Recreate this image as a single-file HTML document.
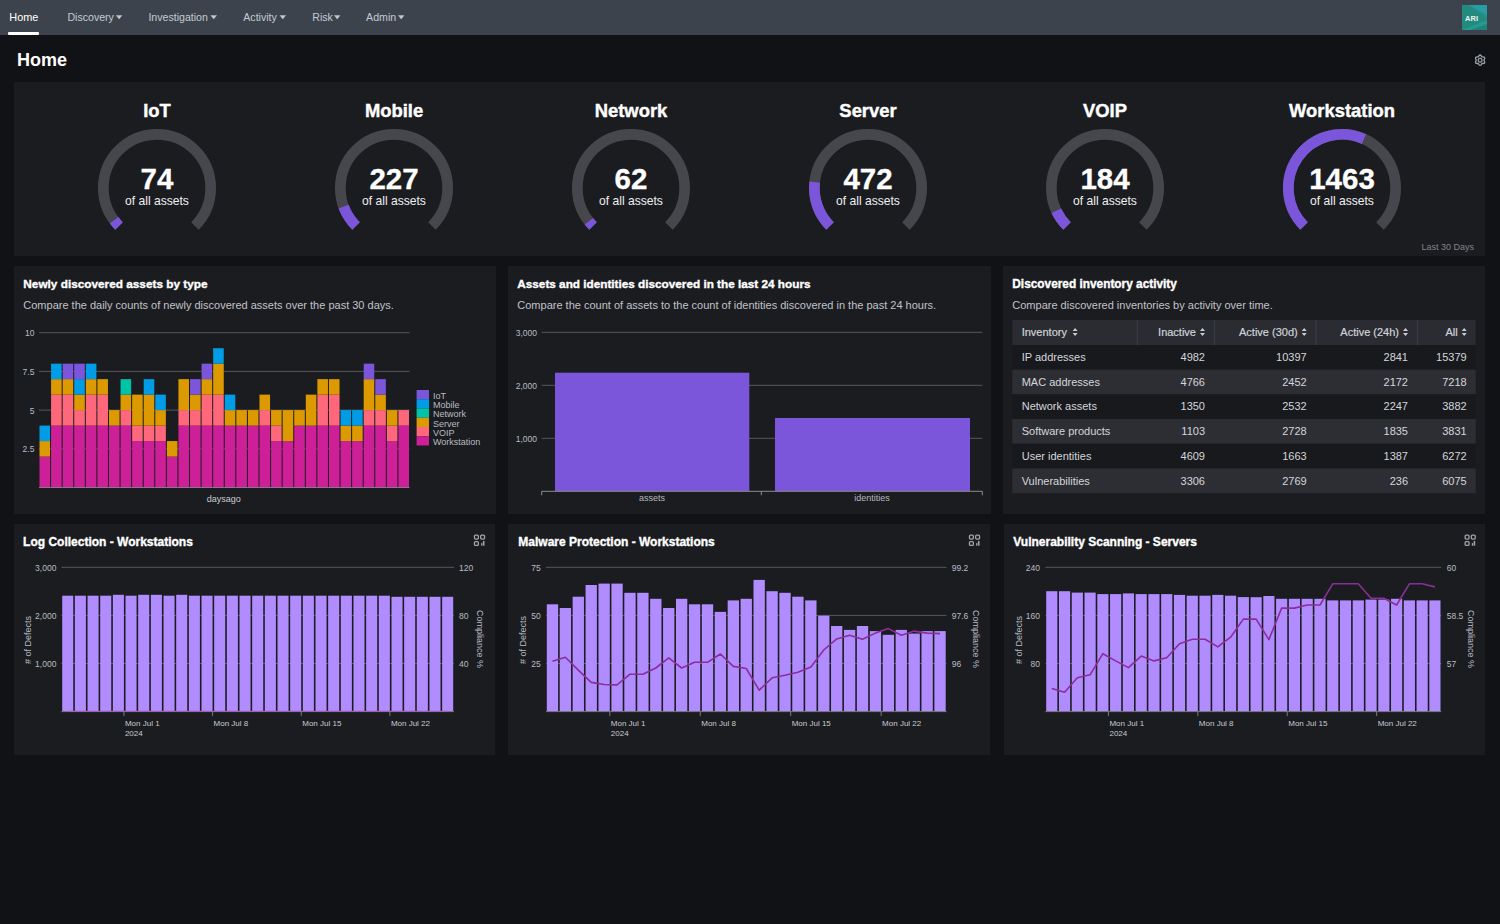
<!DOCTYPE html>
<html><head><meta charset="utf-8"><style>
*{box-sizing:border-box;margin:0;padding:0}
html,body{width:1500px;height:924px;overflow:hidden;background:#111215;font-family:"Liberation Sans",sans-serif;color:#e1e2e5}
.abs{position:absolute}
svg{position:absolute;overflow:visible}
svg text{font-family:"Liberation Sans",sans-serif}
#nav{position:absolute;left:0;top:0;width:1500px;height:35px;background:#3c434c}
.panel{position:absolute;background:#1b1c20}
</style></head><body>
<div id="nav"></div>
<svg style="left:0;top:0" width="1500" height="80">
<text x="9.3" y="20.8" font-size="10.9" fill="#fff">Home</text>
<rect x="8" y="32" width="31" height="3" rx="1" fill="#fff"/>
<text x="67.4" y="20.8" font-size="10.6" fill="#c3cbd4">Discovery</text>
<path d="M116.3 15.5h5.6l-2.8 3.6z" fill="#c3cbd4" stroke="#c3cbd4" stroke-width="0.4" stroke-linejoin="round"/>
<text x="148.4" y="20.8" font-size="10.6" fill="#c3cbd4">Investigation</text>
<path d="M210.9 15.5h5.6l-2.8 3.6z" fill="#c3cbd4" stroke="#c3cbd4" stroke-width="0.4" stroke-linejoin="round"/>
<text x="243.3" y="20.8" font-size="10.6" fill="#c3cbd4">Activity</text>
<path d="M280 15.5h5.6l-2.8 3.6z" fill="#c3cbd4" stroke="#c3cbd4" stroke-width="0.4" stroke-linejoin="round"/>
<text x="312.3" y="20.8" font-size="10.6" fill="#c3cbd4">Risk</text>
<path d="M334.4 15.5h5.6l-2.8 3.6z" fill="#c3cbd4" stroke="#c3cbd4" stroke-width="0.4" stroke-linejoin="round"/>
<text x="366.1" y="20.8" font-size="10.6" fill="#c3cbd4">Admin</text>
<path d="M398.4 15.5h5.6l-2.8 3.6z" fill="#c3cbd4" stroke="#c3cbd4" stroke-width="0.4" stroke-linejoin="round"/>
<g transform="translate(1462,5)"><rect width="25" height="25" fill="#238a7e"/><polygon points="6.5,0 25,0 25,10.5" fill="#279ea6"/><polygon points="6.5,0 25,10.5 25,13.5 19,9" fill="#25928f" opacity="0.6"/><polygon points="0,25 25,15 25,25" fill="#259a92"/><polygon points="8,25 25,19 25,25" fill="#228479"/><text x="3" y="15.6" font-size="7.4" font-weight="bold" fill="#eef5f4" letter-spacing="0.2">ARI</text></g>
<path d="M1478.22 56.95Q1480.1 53 1481.97 56.95Q1486.34 56.6 1483.85 60.2Q1486.34 63.8 1481.97 63.45Q1480.1 67.4 1478.22 63.45Q1473.86 63.8 1476.35 60.2Q1473.86 56.6 1478.22 56.95Z" fill="none" stroke="#9ea3a9" stroke-width="1.3" stroke-linejoin="round"/><circle cx="1480.1" cy="60.2" r="1.9" fill="none" stroke="#9ea3a9" stroke-width="1.2"/>
<text x="17" y="66.3" font-size="18" font-weight="bold" fill="#fff">Home</text>
</svg>
<div class="panel" style="left:14px;top:82px;width:1471px;height:174px"></div>
<svg style="left:0;top:0" width="1500" height="300">
<path d="M119.06 225.94A53.65 53.65 0 1 1 194.94 225.94" fill="none" stroke="#46474c" stroke-width="10.7"/>
<path d="M119.06 225.94A53.65 53.65 0 0 1 114.13 220.25" fill="none" stroke="#7b56db" stroke-width="10.7"/>
<text x="157" y="117" text-anchor="middle" font-size="18.4" font-weight="bold" fill="#fff" stroke="#fff" stroke-width="0.4">IoT</text>
<text x="157" y="188.6" text-anchor="middle" font-size="29.5" font-weight="bold" fill="#fff" stroke="#fff" stroke-width="0.3">74</text>
<text x="157" y="204.6" text-anchor="middle" font-size="12.1" fill="#f0f0f2">of all assets</text>
<path d="M356.06 225.94A53.65 53.65 0 1 1 431.94 225.94" fill="none" stroke="#46474c" stroke-width="10.7"/>
<path d="M356.06 225.94A53.65 53.65 0 0 1 343.68 206.62" fill="none" stroke="#7b56db" stroke-width="10.7"/>
<text x="394" y="117" text-anchor="middle" font-size="18.4" font-weight="bold" fill="#fff" stroke="#fff" stroke-width="0.4">Mobile</text>
<text x="394" y="188.6" text-anchor="middle" font-size="29.5" font-weight="bold" fill="#fff" stroke="#fff" stroke-width="0.3">227</text>
<text x="394" y="204.6" text-anchor="middle" font-size="12.1" fill="#f0f0f2">of all assets</text>
<path d="M593.06 225.94A53.65 53.65 0 1 1 668.94 225.94" fill="none" stroke="#46474c" stroke-width="10.7"/>
<path d="M593.06 225.94A53.65 53.65 0 0 1 588.87 221.22" fill="none" stroke="#7b56db" stroke-width="10.7"/>
<text x="631" y="117" text-anchor="middle" font-size="18.4" font-weight="bold" fill="#fff" stroke="#fff" stroke-width="0.4">Network</text>
<text x="631" y="188.6" text-anchor="middle" font-size="29.5" font-weight="bold" fill="#fff" stroke="#fff" stroke-width="0.3">62</text>
<text x="631" y="204.6" text-anchor="middle" font-size="12.1" fill="#f0f0f2">of all assets</text>
<path d="M830.06 225.94A53.65 53.65 0 1 1 905.94 225.94" fill="none" stroke="#46474c" stroke-width="10.7"/>
<path d="M830.06 225.94A53.65 53.65 0 0 1 814.68 182.07" fill="none" stroke="#7b56db" stroke-width="10.7"/>
<text x="868" y="117" text-anchor="middle" font-size="18.4" font-weight="bold" fill="#fff" stroke="#fff" stroke-width="0.4">Server</text>
<text x="868" y="188.6" text-anchor="middle" font-size="29.5" font-weight="bold" fill="#fff" stroke="#fff" stroke-width="0.3">472</text>
<text x="868" y="204.6" text-anchor="middle" font-size="12.1" fill="#f0f0f2">of all assets</text>
<path d="M1067.06 225.94A53.65 53.65 0 1 1 1142.94 225.94" fill="none" stroke="#46474c" stroke-width="10.7"/>
<path d="M1067.06 225.94A53.65 53.65 0 0 1 1056.37 210.66" fill="none" stroke="#7b56db" stroke-width="10.7"/>
<text x="1105" y="117" text-anchor="middle" font-size="18.4" font-weight="bold" fill="#fff" stroke="#fff" stroke-width="0.4">VOIP</text>
<text x="1105" y="188.6" text-anchor="middle" font-size="29.5" font-weight="bold" fill="#fff" stroke="#fff" stroke-width="0.3">184</text>
<text x="1105" y="204.6" text-anchor="middle" font-size="12.1" fill="#f0f0f2">of all assets</text>
<path d="M1304.06 225.94A53.65 53.65 0 1 1 1379.94 225.94" fill="none" stroke="#46474c" stroke-width="10.7"/>
<path d="M1304.06 225.94A53.65 53.65 0 0 1 1363.95 139.05" fill="none" stroke="#7b56db" stroke-width="10.7"/>
<text x="1342" y="117" text-anchor="middle" font-size="18.4" font-weight="bold" fill="#fff" stroke="#fff" stroke-width="0.4">Workstation</text>
<text x="1342" y="188.6" text-anchor="middle" font-size="29.5" font-weight="bold" fill="#fff" stroke="#fff" stroke-width="0.3">1463</text>
<text x="1342" y="204.6" text-anchor="middle" font-size="12.1" fill="#f0f0f2">of all assets</text>
<text x="1474" y="250" text-anchor="end" font-size="9" fill="#80838a">Last 30 Days</text>
</svg>
<div class="panel" style="left:14px;top:266px;width:482px;height:248px"></div>
<div class="panel" style="left:508px;top:266px;width:483px;height:248px"></div>
<div class="panel" style="left:1003px;top:266px;width:482px;height:248px"></div>
<svg style="left:0;top:0" width="1500" height="600">
<text x="23.3" y="288" font-size="11.8" font-weight="bold" fill="#fff" stroke="#fff" stroke-width="0.35">Newly discovered assets by type</text>
<text x="23.3" y="309" font-size="11" fill="#c0c3c9">Compare the daily counts of newly discovered assets over the past 30 days.</text>
<rect x="39" y="332.2" width="370.5" height="1" fill="#55575c"/>
<text x="34.4" y="336.2" text-anchor="end" font-size="8.5" fill="#b9bcc2">10</text>
<rect x="39" y="370.9" width="370.5" height="1" fill="#55575c"/>
<text x="34.4" y="374.9" text-anchor="end" font-size="8.5" fill="#b9bcc2">7.5</text>
<rect x="39" y="409.6" width="370.5" height="1" fill="#55575c"/>
<text x="34.4" y="413.6" text-anchor="end" font-size="8.5" fill="#b9bcc2">5</text>
<rect x="39" y="448.3" width="370.5" height="1" fill="#55575c"/>
<text x="34.4" y="452.3" text-anchor="end" font-size="8.5" fill="#b9bcc2">2.5</text>
<rect x="39.5" y="456.54" width="10.58" height="30.96" fill="#cc1f98"/>
<rect x="39.5" y="441.06" width="10.58" height="15.48" fill="#dd9900"/>
<rect x="39.5" y="425.58" width="10.58" height="15.48" fill="#009ce6"/>
<rect x="51.08" y="425.58" width="10.58" height="61.92" fill="#cc1f98"/>
<rect x="51.08" y="394.62" width="10.58" height="30.96" fill="#ff677b"/>
<rect x="51.08" y="379.14" width="10.58" height="15.48" fill="#dd9900"/>
<rect x="51.08" y="363.66" width="10.58" height="15.48" fill="#009ce6"/>
<rect x="62.66" y="425.58" width="10.58" height="61.92" fill="#cc1f98"/>
<rect x="62.66" y="394.62" width="10.58" height="30.96" fill="#ff677b"/>
<rect x="62.66" y="379.14" width="10.58" height="15.48" fill="#dd9900"/>
<rect x="62.66" y="363.66" width="10.58" height="15.48" fill="#7b56db"/>
<rect x="74.23" y="425.58" width="10.58" height="61.92" fill="#cc1f98"/>
<rect x="74.23" y="410.1" width="10.58" height="15.48" fill="#ff677b"/>
<rect x="74.23" y="394.62" width="10.58" height="15.48" fill="#dd9900"/>
<rect x="74.23" y="379.14" width="10.58" height="15.48" fill="#009ce6"/>
<rect x="74.23" y="363.66" width="10.58" height="15.48" fill="#7b56db"/>
<rect x="85.81" y="425.58" width="10.58" height="61.92" fill="#cc1f98"/>
<rect x="85.81" y="394.62" width="10.58" height="30.96" fill="#ff677b"/>
<rect x="85.81" y="379.14" width="10.58" height="15.48" fill="#dd9900"/>
<rect x="85.81" y="363.66" width="10.58" height="15.48" fill="#009ce6"/>
<rect x="97.39" y="425.58" width="10.58" height="61.92" fill="#cc1f98"/>
<rect x="97.39" y="394.62" width="10.58" height="30.96" fill="#ff677b"/>
<rect x="97.39" y="379.14" width="10.58" height="15.48" fill="#dd9900"/>
<rect x="108.97" y="425.58" width="10.58" height="61.92" fill="#cc1f98"/>
<rect x="108.97" y="410.1" width="10.58" height="15.48" fill="#dd9900"/>
<rect x="120.55" y="425.58" width="10.58" height="61.92" fill="#cc1f98"/>
<rect x="120.55" y="410.1" width="10.58" height="15.48" fill="#ff677b"/>
<rect x="120.55" y="394.62" width="10.58" height="15.48" fill="#dd9900"/>
<rect x="120.55" y="379.14" width="10.58" height="15.48" fill="#00c4a6"/>
<rect x="132.12" y="441.06" width="10.58" height="46.44" fill="#cc1f98"/>
<rect x="132.12" y="425.58" width="10.58" height="15.48" fill="#ff677b"/>
<rect x="132.12" y="394.62" width="10.58" height="30.96" fill="#dd9900"/>
<rect x="143.7" y="441.06" width="10.58" height="46.44" fill="#cc1f98"/>
<rect x="143.7" y="425.58" width="10.58" height="15.48" fill="#ff677b"/>
<rect x="143.7" y="394.62" width="10.58" height="30.96" fill="#dd9900"/>
<rect x="143.7" y="379.14" width="10.58" height="15.48" fill="#009ce6"/>
<rect x="155.28" y="441.06" width="10.58" height="46.44" fill="#cc1f98"/>
<rect x="155.28" y="425.58" width="10.58" height="15.48" fill="#ff677b"/>
<rect x="155.28" y="410.1" width="10.58" height="15.48" fill="#dd9900"/>
<rect x="155.28" y="394.62" width="10.58" height="15.48" fill="#009ce6"/>
<rect x="166.86" y="456.54" width="10.58" height="30.96" fill="#cc1f98"/>
<rect x="166.86" y="441.06" width="10.58" height="15.48" fill="#dd9900"/>
<rect x="178.44" y="425.58" width="10.58" height="61.92" fill="#cc1f98"/>
<rect x="178.44" y="410.1" width="10.58" height="15.48" fill="#ff677b"/>
<rect x="178.44" y="379.14" width="10.58" height="30.96" fill="#dd9900"/>
<rect x="190.02" y="425.58" width="10.58" height="61.92" fill="#cc1f98"/>
<rect x="190.02" y="410.1" width="10.58" height="15.48" fill="#ff677b"/>
<rect x="190.02" y="394.62" width="10.58" height="15.48" fill="#dd9900"/>
<rect x="190.02" y="379.14" width="10.58" height="15.48" fill="#7b56db"/>
<rect x="201.59" y="425.58" width="10.58" height="61.92" fill="#cc1f98"/>
<rect x="201.59" y="394.62" width="10.58" height="30.96" fill="#ff677b"/>
<rect x="201.59" y="379.14" width="10.58" height="15.48" fill="#dd9900"/>
<rect x="201.59" y="363.66" width="10.58" height="15.48" fill="#7b56db"/>
<rect x="213.17" y="425.58" width="10.58" height="61.92" fill="#cc1f98"/>
<rect x="213.17" y="394.62" width="10.58" height="30.96" fill="#ff677b"/>
<rect x="213.17" y="363.66" width="10.58" height="30.96" fill="#dd9900"/>
<rect x="213.17" y="348.18" width="10.58" height="15.48" fill="#009ce6"/>
<rect x="224.75" y="425.58" width="10.58" height="61.92" fill="#cc1f98"/>
<rect x="224.75" y="410.1" width="10.58" height="15.48" fill="#dd9900"/>
<rect x="224.75" y="394.62" width="10.58" height="15.48" fill="#009ce6"/>
<rect x="236.33" y="425.58" width="10.58" height="61.92" fill="#cc1f98"/>
<rect x="236.33" y="410.1" width="10.58" height="15.48" fill="#dd9900"/>
<rect x="247.91" y="425.58" width="10.58" height="61.92" fill="#cc1f98"/>
<rect x="247.91" y="410.1" width="10.58" height="15.48" fill="#dd9900"/>
<rect x="259.48" y="425.58" width="10.58" height="61.92" fill="#cc1f98"/>
<rect x="259.48" y="410.1" width="10.58" height="15.48" fill="#ff677b"/>
<rect x="259.48" y="394.62" width="10.58" height="15.48" fill="#dd9900"/>
<rect x="271.06" y="441.06" width="10.58" height="46.44" fill="#cc1f98"/>
<rect x="271.06" y="425.58" width="10.58" height="15.48" fill="#ff677b"/>
<rect x="271.06" y="410.1" width="10.58" height="15.48" fill="#dd9900"/>
<rect x="282.64" y="441.06" width="10.58" height="46.44" fill="#cc1f98"/>
<rect x="282.64" y="410.1" width="10.58" height="30.96" fill="#dd9900"/>
<rect x="294.22" y="425.58" width="10.58" height="61.92" fill="#cc1f98"/>
<rect x="294.22" y="410.1" width="10.58" height="15.48" fill="#dd9900"/>
<rect x="305.8" y="425.58" width="10.58" height="61.92" fill="#cc1f98"/>
<rect x="305.8" y="394.62" width="10.58" height="30.96" fill="#dd9900"/>
<rect x="317.38" y="425.58" width="10.58" height="61.92" fill="#cc1f98"/>
<rect x="317.38" y="394.62" width="10.58" height="30.96" fill="#ff677b"/>
<rect x="317.38" y="379.14" width="10.58" height="15.48" fill="#dd9900"/>
<rect x="328.95" y="425.58" width="10.58" height="61.92" fill="#cc1f98"/>
<rect x="328.95" y="394.62" width="10.58" height="30.96" fill="#ff677b"/>
<rect x="328.95" y="379.14" width="10.58" height="15.48" fill="#dd9900"/>
<rect x="340.53" y="441.06" width="10.58" height="46.44" fill="#cc1f98"/>
<rect x="340.53" y="425.58" width="10.58" height="15.48" fill="#dd9900"/>
<rect x="340.53" y="410.1" width="10.58" height="15.48" fill="#009ce6"/>
<rect x="352.11" y="441.06" width="10.58" height="46.44" fill="#cc1f98"/>
<rect x="352.11" y="425.58" width="10.58" height="15.48" fill="#dd9900"/>
<rect x="352.11" y="410.1" width="10.58" height="15.48" fill="#009ce6"/>
<rect x="363.69" y="425.58" width="10.58" height="61.92" fill="#cc1f98"/>
<rect x="363.69" y="410.1" width="10.58" height="15.48" fill="#ff677b"/>
<rect x="363.69" y="379.14" width="10.58" height="30.96" fill="#dd9900"/>
<rect x="363.69" y="363.66" width="10.58" height="15.48" fill="#7b56db"/>
<rect x="375.27" y="425.58" width="10.58" height="61.92" fill="#cc1f98"/>
<rect x="375.27" y="410.1" width="10.58" height="15.48" fill="#ff677b"/>
<rect x="375.27" y="394.62" width="10.58" height="15.48" fill="#dd9900"/>
<rect x="375.27" y="379.14" width="10.58" height="15.48" fill="#7b56db"/>
<rect x="386.84" y="441.06" width="10.58" height="46.44" fill="#cc1f98"/>
<rect x="386.84" y="425.58" width="10.58" height="15.48" fill="#ff677b"/>
<rect x="386.84" y="410.1" width="10.58" height="15.48" fill="#dd9900"/>
<rect x="398.42" y="425.58" width="10.58" height="61.92" fill="#cc1f98"/>
<rect x="398.42" y="410.1" width="10.58" height="15.48" fill="#ff677b"/>
<rect x="39" y="487" width="370.5" height="1" fill="#9a8a98" opacity="0.8"/>
<rect x="416.6" y="390" width="12.4" height="9.25" fill="#7b56db"/>
<text x="433" y="398.9" font-size="9" fill="#b8bbc0">IoT</text>
<rect x="416.6" y="399.25" width="12.4" height="9.25" fill="#009ce6"/>
<text x="433" y="408.15" font-size="9" fill="#b8bbc0">Mobile</text>
<rect x="416.6" y="408.5" width="12.4" height="9.25" fill="#00c4a6"/>
<text x="433" y="417.4" font-size="9" fill="#b8bbc0">Network</text>
<rect x="416.6" y="417.75" width="12.4" height="9.25" fill="#dd9900"/>
<text x="433" y="426.65" font-size="9" fill="#b8bbc0">Server</text>
<rect x="416.6" y="427" width="12.4" height="9.25" fill="#ff677b"/>
<text x="433" y="435.9" font-size="9" fill="#b8bbc0">VOIP</text>
<rect x="416.6" y="436.25" width="12.4" height="9.25" fill="#cc1f98"/>
<text x="433" y="445.15" font-size="9" fill="#b8bbc0">Workstation</text>
<text x="223.7" y="501.5" text-anchor="middle" font-size="9" fill="#c8cbd0">daysago</text>
<text x="517.3" y="288" font-size="11.75" font-weight="bold" fill="#fff" stroke="#fff" stroke-width="0.35">Assets and identities discovered in the last 24 hours</text>
<text x="517.3" y="309" font-size="11" fill="#c0c3c9">Compare the count of assets to the count of identities discovered in the past 24 hours.</text>
<rect x="541.7" y="331.8" width="440.6" height="1" fill="#55575c"/>
<text x="537" y="335.9" text-anchor="end" font-size="8.5" fill="#b9bcc2">3,000</text>
<rect x="541.7" y="384.8" width="440.6" height="1" fill="#55575c"/>
<text x="537" y="388.9" text-anchor="end" font-size="8.5" fill="#b9bcc2">2,000</text>
<rect x="541.7" y="437.8" width="440.6" height="1" fill="#55575c"/>
<text x="537" y="441.9" text-anchor="end" font-size="8.5" fill="#b9bcc2">1,000</text>
<rect x="555" y="372.7" width="194.3" height="118.6" fill="#7b56db"/>
<rect x="775" y="418" width="195" height="73.3" fill="#7b56db"/>
<rect x="541.7" y="490.8" width="440.6" height="1" fill="#8a8c91"/>
<rect x="541.2" y="491.3" width="1" height="4" fill="#8a8c91"/>
<rect x="760.8" y="491.3" width="1" height="4" fill="#8a8c91"/>
<rect x="981.8" y="491.3" width="1" height="4" fill="#8a8c91"/>
<text x="652" y="501" text-anchor="middle" font-size="9" fill="#b5b8be">assets</text>
<text x="872" y="501" text-anchor="middle" font-size="9" fill="#b5b8be">identities</text>
<text x="1012.3" y="288" font-size="11.85" font-weight="bold" fill="#fff" stroke="#fff" stroke-width="0.35">Discovered inventory activity</text>
<text x="1012.3" y="309" font-size="11" fill="#c0c3c9">Compare discovered inventories by activity over time.</text>
<rect x="1012.3" y="320" width="463.4" height="25" fill="#2a2c32"/>
<rect x="1136.8" y="320" width="1" height="25" fill="#394049"/>
<rect x="1213.8" y="320" width="1" height="25" fill="#394049"/>
<rect x="1315.5" y="320" width="1" height="25" fill="#394049"/>
<rect x="1417.2" y="320" width="1" height="25" fill="#394049"/>
<text x="1021.7" y="335.5" font-size="11" fill="#d0d3d8" stroke="#d0d3d8" stroke-width="0.2">Inventory</text>
<path d="M1072.6 331l2.5 -3l2.5 3z M1072.6 333l2.5 3l2.5 -3z" fill="#c8cbd0"/>
<text x="1196" y="335.5" text-anchor="end" font-size="11" fill="#d0d3d8" stroke="#d0d3d8" stroke-width="0.2">Inactive</text>
<path d="M1200 331l2.5 -3l2.5 3z M1200 333l2.5 3l2.5 -3z" fill="#c8cbd0"/>
<text x="1297.7" y="335.5" text-anchor="end" font-size="11" fill="#d0d3d8" stroke="#d0d3d8" stroke-width="0.2">Active (30d)</text>
<path d="M1301.7 331l2.5 -3l2.5 3z M1301.7 333l2.5 3l2.5 -3z" fill="#c8cbd0"/>
<text x="1399" y="335.5" text-anchor="end" font-size="11" fill="#d0d3d8" stroke="#d0d3d8" stroke-width="0.2">Active (24h)</text>
<path d="M1403 331l2.5 -3l2.5 3z M1403 333l2.5 3l2.5 -3z" fill="#c8cbd0"/>
<text x="1457.7" y="335.5" text-anchor="end" font-size="11" fill="#d0d3d8" stroke="#d0d3d8" stroke-width="0.2">All</text>
<path d="M1461.7 331l2.5 -3l2.5 3z M1461.7 333l2.5 3l2.5 -3z" fill="#c8cbd0"/>
<rect x="1012.3" y="345" width="463.4" height="24.7" fill="#18191d"/>
<text x="1021.7" y="361" font-size="11" fill="#d4d6da">IP addresses</text>
<text x="1205" y="361" text-anchor="end" font-size="11" fill="#d4d6da">4982</text>
<text x="1306.7" y="361" text-anchor="end" font-size="11" fill="#d4d6da">10397</text>
<text x="1408" y="361" text-anchor="end" font-size="11" fill="#d4d6da">2841</text>
<text x="1466.7" y="361" text-anchor="end" font-size="11" fill="#d4d6da">15379</text>
<rect x="1012.3" y="369.7" width="463.4" height="24.7" fill="#2d2e33"/>
<text x="1021.7" y="385.7" font-size="11" fill="#d4d6da">MAC addresses</text>
<text x="1205" y="385.7" text-anchor="end" font-size="11" fill="#d4d6da">4766</text>
<text x="1306.7" y="385.7" text-anchor="end" font-size="11" fill="#d4d6da">2452</text>
<text x="1408" y="385.7" text-anchor="end" font-size="11" fill="#d4d6da">2172</text>
<text x="1466.7" y="385.7" text-anchor="end" font-size="11" fill="#d4d6da">7218</text>
<rect x="1012.3" y="394.4" width="463.4" height="24.7" fill="#18191d"/>
<text x="1021.7" y="410.4" font-size="11" fill="#d4d6da">Network assets</text>
<text x="1205" y="410.4" text-anchor="end" font-size="11" fill="#d4d6da">1350</text>
<text x="1306.7" y="410.4" text-anchor="end" font-size="11" fill="#d4d6da">2532</text>
<text x="1408" y="410.4" text-anchor="end" font-size="11" fill="#d4d6da">2247</text>
<text x="1466.7" y="410.4" text-anchor="end" font-size="11" fill="#d4d6da">3882</text>
<rect x="1012.3" y="419.1" width="463.4" height="24.7" fill="#2d2e33"/>
<text x="1021.7" y="435.1" font-size="11" fill="#d4d6da">Software products</text>
<text x="1205" y="435.1" text-anchor="end" font-size="11" fill="#d4d6da">1103</text>
<text x="1306.7" y="435.1" text-anchor="end" font-size="11" fill="#d4d6da">2728</text>
<text x="1408" y="435.1" text-anchor="end" font-size="11" fill="#d4d6da">1835</text>
<text x="1466.7" y="435.1" text-anchor="end" font-size="11" fill="#d4d6da">3831</text>
<rect x="1012.3" y="443.8" width="463.4" height="24.7" fill="#18191d"/>
<text x="1021.7" y="459.8" font-size="11" fill="#d4d6da">User identities</text>
<text x="1205" y="459.8" text-anchor="end" font-size="11" fill="#d4d6da">4609</text>
<text x="1306.7" y="459.8" text-anchor="end" font-size="11" fill="#d4d6da">1663</text>
<text x="1408" y="459.8" text-anchor="end" font-size="11" fill="#d4d6da">1387</text>
<text x="1466.7" y="459.8" text-anchor="end" font-size="11" fill="#d4d6da">6272</text>
<rect x="1012.3" y="468.5" width="463.4" height="24.7" fill="#2d2e33"/>
<text x="1021.7" y="484.5" font-size="11" fill="#d4d6da">Vulnerabilities</text>
<text x="1205" y="484.5" text-anchor="end" font-size="11" fill="#d4d6da">3306</text>
<text x="1306.7" y="484.5" text-anchor="end" font-size="11" fill="#d4d6da">2769</text>
<text x="1408" y="484.5" text-anchor="end" font-size="11" fill="#d4d6da">236</text>
<text x="1466.7" y="484.5" text-anchor="end" font-size="11" fill="#d4d6da">6075</text>
</svg>
<div class="panel" style="left:14px;top:524px;width:481px;height:231px"></div>
<div class="panel" style="left:508px;top:524px;width:482px;height:231px"></div>
<div class="panel" style="left:1004px;top:524px;width:481px;height:231px"></div>
<svg style="left:0;top:0" width="1500" height="924">
<text x="23.1" y="545.8" font-size="12" font-weight="bold" fill="#fff" stroke="#fff" stroke-width="0.35">Log Collection - Workstations</text>
<rect x="474.45" y="535.15" width="3.9" height="3.9" rx="1" fill="none" stroke="#a0a3a8" stroke-width="1.3"/><rect x="480.65" y="535.15" width="3.9" height="3.9" rx="1" fill="none" stroke="#a0a3a8" stroke-width="1.3"/><rect x="474.45" y="541.55" width="3.9" height="3.9" rx="1" fill="none" stroke="#a0a3a8" stroke-width="1.3"/><rect x="481.1" y="543.1" width="1.3" height="2.6" fill="#a0a3a8"/><rect x="482.9" y="541" width="1.6" height="4.7" fill="#a0a3a8"/>
<rect x="61.4" y="566.8" width="392.6" height="1" fill="#55575c"/>
<text x="56.4" y="570.8" text-anchor="end" font-size="8.5" fill="#b9bcc2">3,000</text>
<rect x="61.4" y="614.9" width="392.6" height="1" fill="#55575c"/>
<text x="56.4" y="618.9" text-anchor="end" font-size="8.5" fill="#b9bcc2">2,000</text>
<rect x="61.4" y="663" width="392.6" height="1" fill="#55575c"/>
<text x="56.4" y="667" text-anchor="end" font-size="8.5" fill="#b9bcc2">1,000</text>
<text x="459" y="570.8" font-size="8.5" fill="#b9bcc2">120</text>
<text x="459" y="618.9" font-size="8.5" fill="#b9bcc2">80</text>
<text x="459" y="667" font-size="8.5" fill="#b9bcc2">40</text>
<rect x="62.2" y="595.7" width="11.06" height="115.9" fill="#b08cff"/>
<rect x="74.86" y="595.7" width="11.06" height="115.9" fill="#b08cff"/>
<rect x="87.53" y="595.7" width="11.06" height="115.9" fill="#b08cff"/>
<rect x="100.19" y="595.7" width="11.06" height="115.9" fill="#b08cff"/>
<rect x="112.86" y="594.8" width="11.06" height="116.8" fill="#b08cff"/>
<rect x="125.52" y="595.7" width="11.06" height="115.9" fill="#b08cff"/>
<rect x="138.19" y="594.8" width="11.06" height="116.8" fill="#b08cff"/>
<rect x="150.85" y="594.8" width="11.06" height="116.8" fill="#b08cff"/>
<rect x="163.52" y="595.7" width="11.06" height="115.9" fill="#b08cff"/>
<rect x="176.18" y="594.8" width="11.06" height="116.8" fill="#b08cff"/>
<rect x="188.85" y="595.7" width="11.06" height="115.9" fill="#b08cff"/>
<rect x="201.51" y="595.7" width="11.06" height="115.9" fill="#b08cff"/>
<rect x="214.17" y="595.7" width="11.06" height="115.9" fill="#b08cff"/>
<rect x="226.84" y="595.7" width="11.06" height="115.9" fill="#b08cff"/>
<rect x="239.5" y="595.7" width="11.06" height="115.9" fill="#b08cff"/>
<rect x="252.17" y="595.7" width="11.06" height="115.9" fill="#b08cff"/>
<rect x="264.83" y="595.7" width="11.06" height="115.9" fill="#b08cff"/>
<rect x="277.5" y="595.7" width="11.06" height="115.9" fill="#b08cff"/>
<rect x="290.16" y="595.7" width="11.06" height="115.9" fill="#b08cff"/>
<rect x="302.83" y="595.7" width="11.06" height="115.9" fill="#b08cff"/>
<rect x="315.49" y="595.7" width="11.06" height="115.9" fill="#b08cff"/>
<rect x="328.15" y="595.7" width="11.06" height="115.9" fill="#b08cff"/>
<rect x="340.82" y="595.7" width="11.06" height="115.9" fill="#b08cff"/>
<rect x="353.48" y="595.7" width="11.06" height="115.9" fill="#b08cff"/>
<rect x="366.15" y="595.7" width="11.06" height="115.9" fill="#b08cff"/>
<rect x="378.81" y="595.7" width="11.06" height="115.9" fill="#b08cff"/>
<rect x="391.48" y="596.8" width="11.06" height="114.8" fill="#b08cff"/>
<rect x="404.14" y="596.8" width="11.06" height="114.8" fill="#b08cff"/>
<rect x="416.81" y="596.8" width="11.06" height="114.8" fill="#b08cff"/>
<rect x="429.47" y="596.8" width="11.06" height="114.8" fill="#b08cff"/>
<rect x="442.14" y="596.8" width="11.06" height="114.8" fill="#b08cff"/>
<rect x="61.4" y="711.1" width="392.6" height="1" fill="#77787d"/>
<polyline points="67.73,711.4 80.4,711.4 93.06,711.4 105.73,711.4 118.39,711.4 131.05,711.4 143.72,711.4 156.38,711.4 169.05,711.4 181.71,711.4 194.38,711.4 207.04,711.4 219.71,711.4 232.37,711.4 245.04,711.4 257.7,711.4 270.36,711.4 283.03,711.4 295.69,711.4 308.36,711.4 321.02,711.4 333.69,711.4 346.35,711.4 359.02,711.4 371.68,711.4 384.35,711.4 397.01,711.4 409.67,711.4 422.34,711.4 435,711.4 447.67,711.4" fill="none" stroke="#a060b0" stroke-width="1.2" stroke-linejoin="round"/>
<rect x="123.42" y="711.6" width="1" height="4.5" fill="#77787d"/>
<text x="124.92" y="725.5" font-size="8" fill="#c8cbd0">Mon Jul 1</text>
<text x="124.92" y="736" font-size="8" fill="#c8cbd0">2024</text>
<rect x="212.07" y="711.6" width="1" height="4.5" fill="#77787d"/>
<text x="213.57" y="725.5" font-size="8" fill="#c8cbd0">Mon Jul 8</text>
<rect x="300.73" y="711.6" width="1" height="4.5" fill="#77787d"/>
<text x="302.23" y="725.5" font-size="8" fill="#c8cbd0">Mon Jul 15</text>
<rect x="389.38" y="711.6" width="1" height="4.5" fill="#77787d"/>
<text x="390.88" y="725.5" font-size="8" fill="#c8cbd0">Mon Jul 22</text>
<text transform="translate(31,640) rotate(-90)" text-anchor="middle" font-size="9" fill="#b9bcc2"># of Defects</text>
<text transform="translate(477,639) rotate(90)" text-anchor="middle" font-size="9" fill="#b9bcc2">Compliance %</text>
<text x="518.3" y="545.8" font-size="12" font-weight="bold" fill="#fff" stroke="#fff" stroke-width="0.35">Malware Protection - Workstations</text>
<rect x="969.45" y="535.15" width="3.9" height="3.9" rx="1" fill="none" stroke="#a0a3a8" stroke-width="1.3"/><rect x="975.65" y="535.15" width="3.9" height="3.9" rx="1" fill="none" stroke="#a0a3a8" stroke-width="1.3"/><rect x="969.45" y="541.55" width="3.9" height="3.9" rx="1" fill="none" stroke="#a0a3a8" stroke-width="1.3"/><rect x="976.1" y="543.1" width="1.3" height="2.6" fill="#a0a3a8"/><rect x="977.9" y="541" width="1.6" height="4.7" fill="#a0a3a8"/>
<rect x="546" y="566.8" width="400.5" height="1" fill="#55575c"/>
<text x="540.7" y="570.8" text-anchor="end" font-size="8.5" fill="#b9bcc2">75</text>
<rect x="546" y="614.9" width="400.5" height="1" fill="#55575c"/>
<text x="540.7" y="618.9" text-anchor="end" font-size="8.5" fill="#b9bcc2">50</text>
<rect x="546" y="663" width="400.5" height="1" fill="#55575c"/>
<text x="540.7" y="667" text-anchor="end" font-size="8.5" fill="#b9bcc2">25</text>
<text x="951.7" y="570.8" font-size="8.5" fill="#b9bcc2">99.2</text>
<text x="951.7" y="618.9" font-size="8.5" fill="#b9bcc2">97.6</text>
<text x="951.7" y="667" font-size="8.5" fill="#b9bcc2">96</text>
<rect x="546.8" y="604.3" width="11.32" height="107.3" fill="#b08cff"/>
<rect x="559.72" y="608" width="11.32" height="103.6" fill="#b08cff"/>
<rect x="572.64" y="596.7" width="11.32" height="114.9" fill="#b08cff"/>
<rect x="585.56" y="585" width="11.32" height="126.6" fill="#b08cff"/>
<rect x="598.48" y="583.6" width="11.32" height="128" fill="#b08cff"/>
<rect x="611.4" y="583.6" width="11.32" height="128" fill="#b08cff"/>
<rect x="624.32" y="592.8" width="11.32" height="118.8" fill="#b08cff"/>
<rect x="637.24" y="592.8" width="11.32" height="118.8" fill="#b08cff"/>
<rect x="650.15" y="598.8" width="11.32" height="112.8" fill="#b08cff"/>
<rect x="663.07" y="608" width="11.32" height="103.6" fill="#b08cff"/>
<rect x="675.99" y="598.8" width="11.32" height="112.8" fill="#b08cff"/>
<rect x="688.91" y="604.3" width="11.32" height="107.3" fill="#b08cff"/>
<rect x="701.83" y="604.3" width="11.32" height="107.3" fill="#b08cff"/>
<rect x="714.75" y="611.9" width="11.32" height="99.7" fill="#b08cff"/>
<rect x="727.67" y="600.4" width="11.32" height="111.2" fill="#b08cff"/>
<rect x="740.59" y="598.8" width="11.32" height="112.8" fill="#b08cff"/>
<rect x="753.51" y="579.9" width="11.32" height="131.7" fill="#b08cff"/>
<rect x="766.43" y="591.2" width="11.32" height="120.4" fill="#b08cff"/>
<rect x="779.35" y="592.8" width="11.32" height="118.8" fill="#b08cff"/>
<rect x="792.27" y="596.7" width="11.32" height="114.9" fill="#b08cff"/>
<rect x="805.19" y="600.4" width="11.32" height="111.2" fill="#b08cff"/>
<rect x="818.11" y="615.7" width="11.32" height="95.9" fill="#b08cff"/>
<rect x="831.03" y="626" width="11.32" height="85.6" fill="#b08cff"/>
<rect x="843.95" y="629.9" width="11.32" height="81.7" fill="#b08cff"/>
<rect x="856.86" y="626" width="11.32" height="85.6" fill="#b08cff"/>
<rect x="869.78" y="631.1" width="11.32" height="80.5" fill="#b08cff"/>
<rect x="882.7" y="634.8" width="11.32" height="76.8" fill="#b08cff"/>
<rect x="895.62" y="629.9" width="11.32" height="81.7" fill="#b08cff"/>
<rect x="908.54" y="633.6" width="11.32" height="78" fill="#b08cff"/>
<rect x="921.46" y="631.1" width="11.32" height="80.5" fill="#b08cff"/>
<rect x="934.38" y="631.1" width="11.32" height="80.5" fill="#b08cff"/>
<rect x="546" y="711.1" width="400.5" height="1" fill="#77787d"/>
<polyline points="552.46,661.3 565.38,657.2 578.3,670.1 591.22,682.4 604.14,684.5 617.06,684.9 629.98,674.2 642.9,674.2 655.81,668 668.73,657.8 681.65,668 694.57,662.3 707.49,662.3 720.41,654 733.33,666.4 746.25,668.5 759.17,690.2 772.09,677.8 785.01,675.3 797.93,672.2 810.85,667.1 823.77,650 836.69,638.9 849.6,635.2 862.52,639.3 875.44,633.1 888.36,628.6 901.28,635.2 914.2,631.1 927.12,633.1 940.04,633.6" fill="none" stroke="#8a2e9a" stroke-width="1.6" stroke-linejoin="round"/>
<rect x="609.3" y="711.6" width="1" height="4.5" fill="#77787d"/>
<text x="610.8" y="725.5" font-size="8" fill="#c8cbd0">Mon Jul 1</text>
<text x="610.8" y="736" font-size="8" fill="#c8cbd0">2024</text>
<rect x="699.73" y="711.6" width="1" height="4.5" fill="#77787d"/>
<text x="701.23" y="725.5" font-size="8" fill="#c8cbd0">Mon Jul 8</text>
<rect x="790.17" y="711.6" width="1" height="4.5" fill="#77787d"/>
<text x="791.67" y="725.5" font-size="8" fill="#c8cbd0">Mon Jul 15</text>
<rect x="880.6" y="711.6" width="1" height="4.5" fill="#77787d"/>
<text x="882.1" y="725.5" font-size="8" fill="#c8cbd0">Mon Jul 22</text>
<text transform="translate(526.3,640) rotate(-90)" text-anchor="middle" font-size="9" fill="#b9bcc2"># of Defects</text>
<text transform="translate(973,639) rotate(90)" text-anchor="middle" font-size="9" fill="#b9bcc2">Compliance %</text>
<text x="1013.3" y="545.8" font-size="12" font-weight="bold" fill="#fff" stroke="#fff" stroke-width="0.35">Vulnerability Scanning - Servers</text>
<rect x="1465.15" y="535.15" width="3.9" height="3.9" rx="1" fill="none" stroke="#a0a3a8" stroke-width="1.3"/><rect x="1471.35" y="535.15" width="3.9" height="3.9" rx="1" fill="none" stroke="#a0a3a8" stroke-width="1.3"/><rect x="1465.15" y="541.55" width="3.9" height="3.9" rx="1" fill="none" stroke="#a0a3a8" stroke-width="1.3"/><rect x="1471.8" y="543.1" width="1.3" height="2.6" fill="#a0a3a8"/><rect x="1473.6" y="541" width="1.6" height="4.7" fill="#a0a3a8"/>
<rect x="1045.4" y="566.8" width="395.9" height="1" fill="#55575c"/>
<text x="1040" y="570.8" text-anchor="end" font-size="8.5" fill="#b9bcc2">240</text>
<rect x="1045.4" y="614.9" width="395.9" height="1" fill="#55575c"/>
<text x="1040" y="618.9" text-anchor="end" font-size="8.5" fill="#b9bcc2">160</text>
<rect x="1045.4" y="663" width="395.9" height="1" fill="#55575c"/>
<text x="1040" y="667" text-anchor="end" font-size="8.5" fill="#b9bcc2">80</text>
<text x="1446.7" y="570.8" font-size="8.5" fill="#b9bcc2">60</text>
<text x="1446.7" y="618.9" font-size="8.5" fill="#b9bcc2">58.5</text>
<text x="1446.7" y="667" font-size="8.5" fill="#b9bcc2">57</text>
<rect x="1046.2" y="591.2" width="11.17" height="120.4" fill="#b08cff"/>
<rect x="1058.97" y="591.2" width="11.17" height="120.4" fill="#b08cff"/>
<rect x="1071.74" y="592.6" width="11.17" height="119" fill="#b08cff"/>
<rect x="1084.51" y="592.6" width="11.17" height="119" fill="#b08cff"/>
<rect x="1097.28" y="594.1" width="11.17" height="117.5" fill="#b08cff"/>
<rect x="1110.05" y="594.1" width="11.17" height="117.5" fill="#b08cff"/>
<rect x="1122.83" y="593.4" width="11.17" height="118.2" fill="#b08cff"/>
<rect x="1135.6" y="594.1" width="11.17" height="117.5" fill="#b08cff"/>
<rect x="1148.37" y="594.1" width="11.17" height="117.5" fill="#b08cff"/>
<rect x="1161.14" y="594.1" width="11.17" height="117.5" fill="#b08cff"/>
<rect x="1173.91" y="594.9" width="11.17" height="116.7" fill="#b08cff"/>
<rect x="1186.68" y="595.7" width="11.17" height="115.9" fill="#b08cff"/>
<rect x="1199.45" y="595.7" width="11.17" height="115.9" fill="#b08cff"/>
<rect x="1212.22" y="594.9" width="11.17" height="116.7" fill="#b08cff"/>
<rect x="1224.99" y="595.7" width="11.17" height="115.9" fill="#b08cff"/>
<rect x="1237.76" y="597.1" width="11.17" height="114.5" fill="#b08cff"/>
<rect x="1250.54" y="597.2" width="11.17" height="114.4" fill="#b08cff"/>
<rect x="1263.31" y="596" width="11.17" height="115.6" fill="#b08cff"/>
<rect x="1276.08" y="598.8" width="11.17" height="112.8" fill="#b08cff"/>
<rect x="1288.85" y="598.8" width="11.17" height="112.8" fill="#b08cff"/>
<rect x="1301.62" y="598.8" width="11.17" height="112.8" fill="#b08cff"/>
<rect x="1314.39" y="598.8" width="11.17" height="112.8" fill="#b08cff"/>
<rect x="1327.16" y="600.4" width="11.17" height="111.2" fill="#b08cff"/>
<rect x="1339.93" y="600.4" width="11.17" height="111.2" fill="#b08cff"/>
<rect x="1352.7" y="600.4" width="11.17" height="111.2" fill="#b08cff"/>
<rect x="1365.47" y="599.6" width="11.17" height="112" fill="#b08cff"/>
<rect x="1378.25" y="599.6" width="11.17" height="112" fill="#b08cff"/>
<rect x="1391.02" y="598.8" width="11.17" height="112.8" fill="#b08cff"/>
<rect x="1403.79" y="600.4" width="11.17" height="111.2" fill="#b08cff"/>
<rect x="1416.56" y="600.4" width="11.17" height="111.2" fill="#b08cff"/>
<rect x="1429.33" y="600.4" width="11.17" height="111.2" fill="#b08cff"/>
<rect x="1045.4" y="711.1" width="395.9" height="1" fill="#77787d"/>
<polyline points="1051.79,688.6 1064.56,692.3 1077.33,677.7 1090.1,674.8 1102.87,653.7 1115.64,660.9 1128.41,667.6 1141.18,656.1 1153.95,660.9 1166.72,657.8 1179.5,643.8 1192.27,639.3 1205.04,639.3 1217.81,646.9 1230.58,637.2 1243.35,619.1 1256.12,619.1 1268.89,639.7 1281.66,608.1 1294.43,608.1 1307.2,605 1319.98,605 1332.75,583.8 1345.52,583.8 1358.29,583.8 1371.06,598.2 1383.83,598.2 1396.6,605 1409.37,583.8 1422.14,583.8 1434.91,586.9" fill="none" stroke="#8a2e9a" stroke-width="1.6" stroke-linejoin="round"/>
<rect x="1107.95" y="711.6" width="1" height="4.5" fill="#77787d"/>
<text x="1109.45" y="725.5" font-size="8" fill="#c8cbd0">Mon Jul 1</text>
<text x="1109.45" y="736" font-size="8" fill="#c8cbd0">2024</text>
<rect x="1197.35" y="711.6" width="1" height="4.5" fill="#77787d"/>
<text x="1198.85" y="725.5" font-size="8" fill="#c8cbd0">Mon Jul 8</text>
<rect x="1286.75" y="711.6" width="1" height="4.5" fill="#77787d"/>
<text x="1288.25" y="725.5" font-size="8" fill="#c8cbd0">Mon Jul 15</text>
<rect x="1376.15" y="711.6" width="1" height="4.5" fill="#77787d"/>
<text x="1377.65" y="725.5" font-size="8" fill="#c8cbd0">Mon Jul 22</text>
<text transform="translate(1022,640) rotate(-90)" text-anchor="middle" font-size="9" fill="#b9bcc2"># of Defects</text>
<text transform="translate(1468,639) rotate(90)" text-anchor="middle" font-size="9" fill="#b9bcc2">Compliance %</text>
</svg>
</body></html>
